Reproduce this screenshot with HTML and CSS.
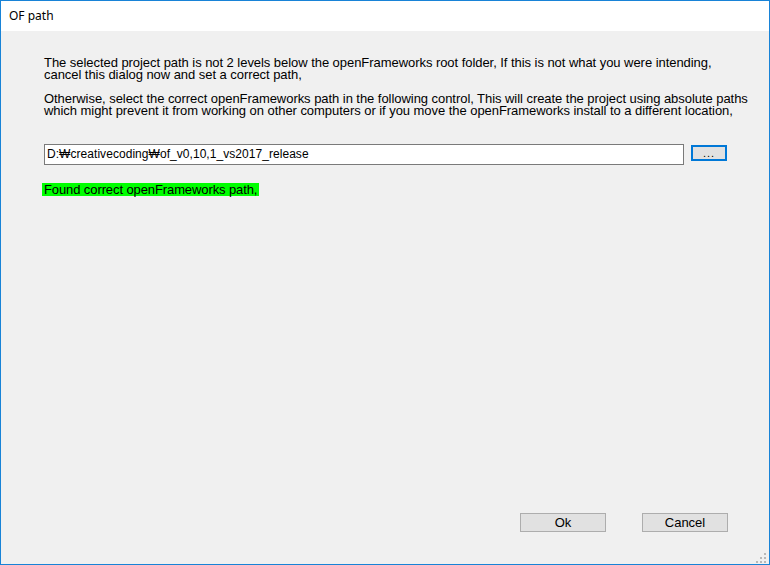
FILE: index.html
```html
<!DOCTYPE html>
<html>
<head>
<meta charset="utf-8">
<link rel="stylesheet" href="styles.css">
</head>
<body>
<div class="window">
  <div class="titlebar">OF path</div>
  <div class="content">
    <p class="msg">The selected project path is not 2 levels below the openFrameworks root folder, If this is not what you were intending,<br>cancel this dialog now and set a correct path,</p>
    <p class="msg msg2">Otherwise, select the correct openFrameworks path in the following control, This will create the project using absolute paths<br>which might prevent it from working on other computers or if you move the openFrameworks install to a different location,</p>
    <div class="pathrow">
      <div class="field">D:₩creativecoding₩of_v0,10,1_vs2017_release</div>
      <div class="browse">...</div>
    </div>
    <div class="status"><span class="found">Found correct openFrameworks path,</span></div>
    <div class="spacer"></div>
    <div class="buttons">
      <div class="btn">Ok</div>
      <div class="btn">Cancel</div>
    </div>
    <div class="grip">
      <svg width="11" height="11" viewBox="0 0 11 11">
        <g fill="#b8b8b8">
          <rect x="8" y="0" width="2" height="2"/>
          <rect x="4" y="4" width="2" height="2"/>
          <rect x="8" y="4" width="2" height="2"/>
          <rect x="0" y="8" width="2" height="2"/>
          <rect x="4" y="8" width="2" height="2"/>
          <rect x="8" y="8" width="2" height="2"/>
        </g>
      </svg>
    </div>
  </div>
</div>
</body>
</html>
```

FILE: styles.css
```css
html, body {
  margin: 0;
  padding: 0;
}
body {
  width: 770px;
  height: 565px;
  overflow: hidden;
}
.window {
  box-sizing: border-box;
  width: 770px;
  height: 565px;
  border: 1px solid #1883d7;
  display: flex;
  flex-direction: column;
  background: #f0f0f0;
}
.titlebar {
  height: 30px;
  background: #ffffff;
  font-family: "Noto Sans", "Open Sans", sans-serif;
  font-size: 12px;
  line-height: 30px;
  padding-left: 8px;
  color: #000;
}
.content {
  flex: 1;
  position: relative;
  display: flex;
  flex-direction: column;
  padding: 26px 0 0 43px;
  font-family: "Liberation Sans", Arial, sans-serif;
  font-size: 13px;
  color: #000;
}
.msg {
  margin: 0;
  line-height: 12px;
  letter-spacing: -0.05px;
}
.msg2 {
  margin-top: 12px;
}
.pathrow {
  display: flex;
  align-items: flex-start;
  margin-top: 27px;
}
.field {
  box-sizing: border-box;
  width: 640px;
  height: 21px;
  border: 1px solid #7a7a7a;
  background: #fff;
  padding: 2px 0 0 2px;
  line-height: 15px;
  font-size: 12px;
  letter-spacing: 0.05px;
}
.browse {
  box-sizing: border-box;
  width: 36px;
  height: 16px;
  margin: 1px 0 0 7px;
  border: 2px solid #0078d7;
  background: #e1e1e1;
  text-align: center;
  line-height: 12px;
  font-size: 11px;
  letter-spacing: 1px;
}
.status {
  margin-top: 17px;
  margin-left: -2px;
}
.found {
  display: inline-block;
  background: #00ff00;
  height: 13px;
  line-height: 13px;
  padding: 0 2px 0 2px;
  letter-spacing: -0.1px;
}
.spacer {
  flex: 1;
}
.buttons {
  display: flex;
  justify-content: flex-end;
  gap: 36px;
  padding-right: 41px;
  margin-bottom: 32px;
}
.btn {
  box-sizing: border-box;
  width: 86px;
  height: 19px;
  border: 1px solid #adadad;
  background: #e1e1e1;
  text-align: center;
  line-height: 17px;
  font-size: 13px;
}
.grip {
  position: absolute;
  right: 2px;
  bottom: 1px;
  width: 11px;
  height: 11px;
}
```
